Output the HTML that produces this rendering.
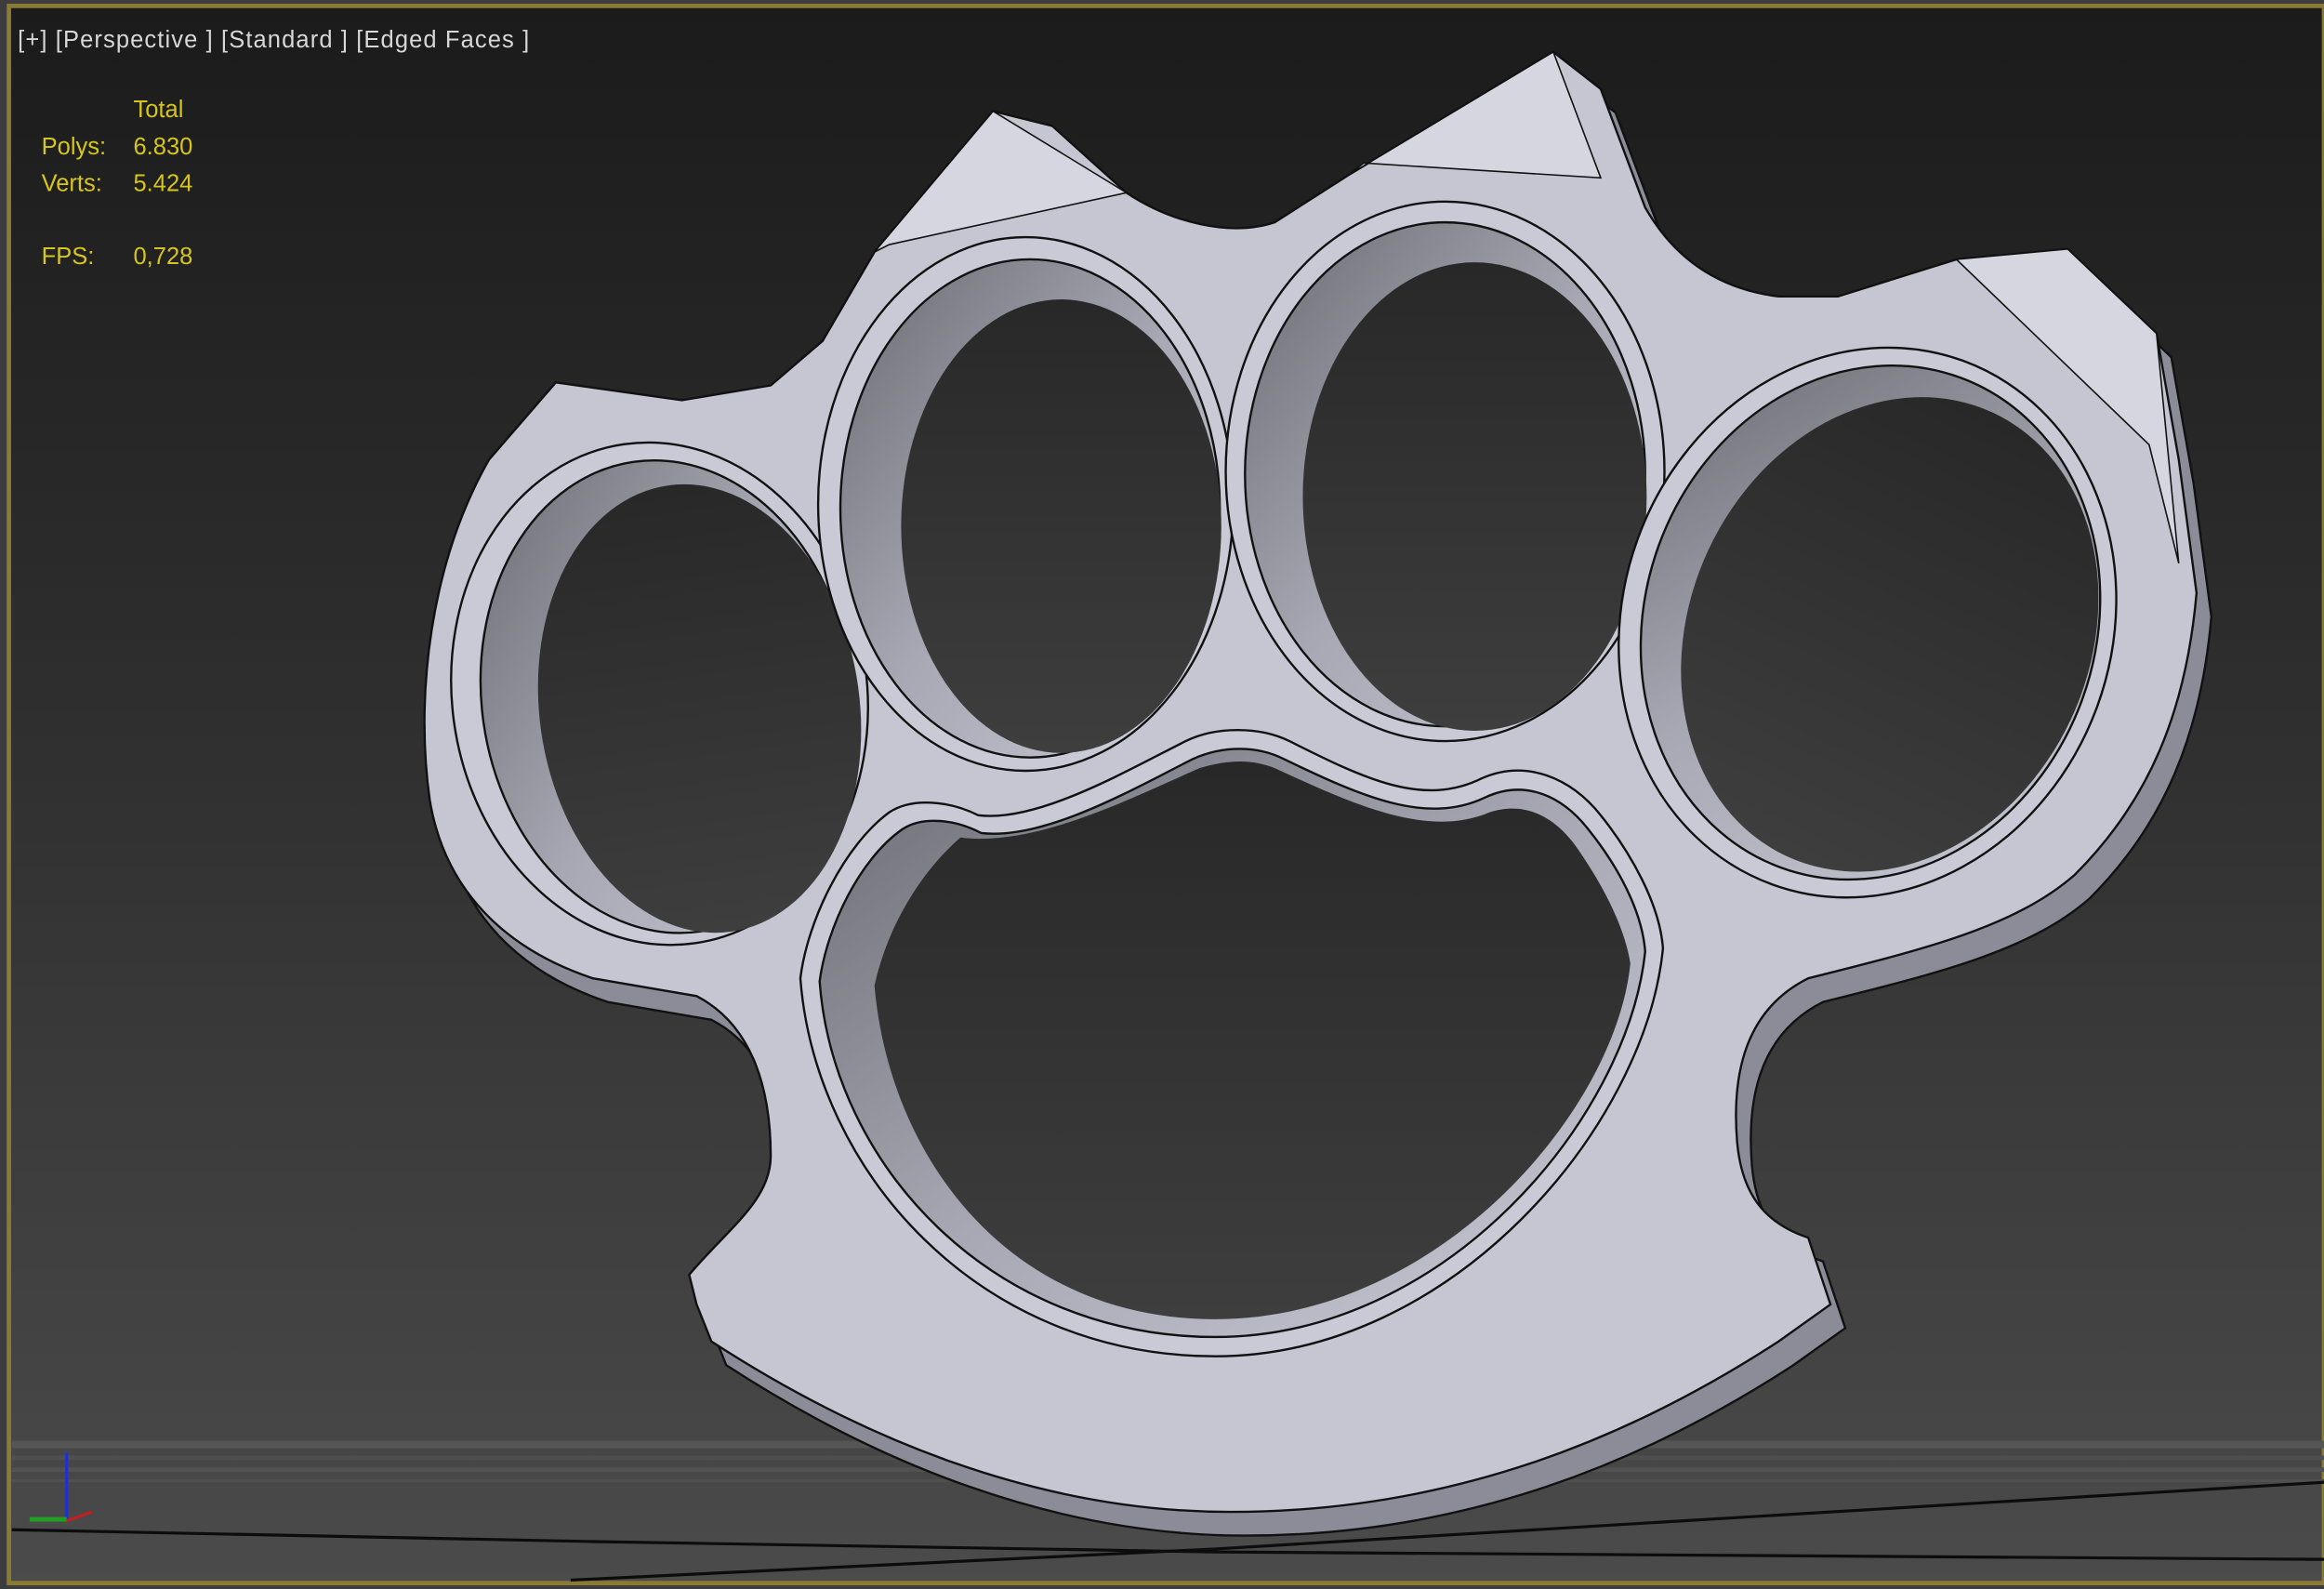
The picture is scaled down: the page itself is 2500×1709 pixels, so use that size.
<!DOCTYPE html>
<html><head><style>
html,body{margin:0;padding:0;background:#2a2a2a;}
svg{display:block}
</style></head><body>
<svg width="2500" height="1709" viewBox="0 0 1568 1072" preserveAspectRatio="none" xmlns="http://www.w3.org/2000/svg">
<defs>
<linearGradient id="bg" x1="0" y1="0" x2="0" y2="1">
<stop offset="0" stop-color="#1b1b1b"/><stop offset="0.5" stop-color="#313131"/><stop offset="1" stop-color="#4b4b4b"/>
</linearGradient>
<linearGradient id="hole" x1="0" y1="0" x2="0" y2="1">
<stop offset="0" stop-color="#282828"/><stop offset="1" stop-color="#3e3e3e"/>
</linearGradient>
<linearGradient id="wall" x1="0" y1="0" x2="1" y2="1">
<stop offset="0" stop-color="#6a6a72"/><stop offset="0.5" stop-color="#a8a8b4"/><stop offset="1" stop-color="#c8c8d4"/>
</linearGradient>
<path id="sil" d="M470,880 L465,860 C490,830 520,810 520,780 C520,730 505,690 470,672 L400,660 C340,640 300,600 290,540 C280,470 290,380 330,310 L375,258 L460,270 L520,260 L555,230 L590,170 L670,75 L710,85 L760,130 C790,150 830,160 860,150 L910,118 L1048,35 L1080,60 L1110,140 C1130,175 1160,195 1200,200 L1240,200 L1320,175 L1395,168 L1455,225 L1470,310 L1482,400 C1475,480 1450,540 1400,590 C1360,625 1300,640 1220,660 C1180,680 1168,720 1172,770 C1175,805 1190,825 1220,835 L1235,880 L1200,905 C1100,970 980,1020 830,1020 C700,1020 580,970 480,905 Z"/>
</defs>
<rect width="1568" height="1072" fill="#3c3c3c"/>
<rect x="6" y="4" width="1562" height="1064" fill="url(#bg)" stroke="#8a7a34" stroke-width="3"/>
<g>
<rect x="8" y="972" width="1560" height="5" fill="#555"/><rect x="8" y="982" width="1560" height="3" fill="#4f4f4f"/>
<rect x="8" y="990" width="1560" height="3" fill="#525252"/><rect x="8" y="998" width="1560" height="2" fill="#505050"/>
</g>
<polyline points="8,1032 400,1040 820,1047 1568,1052" fill="none" stroke="#0c0c0c" stroke-width="2"/>
<polyline points="385,1066 820,1045 1568,1000" fill="none" stroke="#0c0c0c" stroke-width="2"/>
<use href="#sil" transform="translate(10,16)" fill="#8c8c98" stroke="#111" stroke-width="1.5"/>
<use href="#sil" fill="#c6c6d2" stroke="#111" stroke-width="1.5"/>
<path d="M590,170 L670,75 L760,130 L600,165 Z M910,118 L1048,35 L1080,120 L920,110 Z M1320,175 L1395,168 L1455,225 L1470,380 L1450,300 Z" fill="#d6d6e0" stroke="#111" stroke-width="1"/>
<g stroke="#111" stroke-width="1.5">
<ellipse cx="445" cy="468" rx="140" ry="170" transform="rotate(-8 445 468)" fill="#cacad6"/>
<ellipse cx="450" cy="470" rx="125" ry="160" transform="rotate(-8 450 470)" fill="url(#wall)"/>
<ellipse cx="472" cy="478" rx="108" ry="152" transform="rotate(-8 472 478)" fill="url(#hole)" stroke="none"/>

<ellipse cx="692" cy="340" rx="140" ry="180" fill="#cacad6"/>
<ellipse cx="695" cy="343" rx="128" ry="168" fill="url(#wall)"/>
<ellipse cx="716" cy="355" rx="108" ry="153" fill="url(#hole)" stroke="none"/>

<ellipse cx="975" cy="318" rx="148" ry="182" fill="#cacad6"/>
<ellipse cx="975" cy="320" rx="135" ry="170" fill="url(#wall)"/>
<ellipse cx="995" cy="335" rx="116" ry="158" fill="url(#hole)" stroke="none"/>

<ellipse cx="1260" cy="420" rx="165" ry="188" transform="rotate(20 1260 420)" fill="#cacad6"/>
<ellipse cx="1262" cy="420" rx="152" ry="176" transform="rotate(20 1262 420)" fill="url(#wall)"/>
<ellipse cx="1275" cy="428" rx="135" ry="165" transform="rotate(25 1275 428)" fill="url(#hole)" stroke="none"/>

<path fill="#cacad6" d="M540,660 C545,620 570,570 600,548 C615,538 640,540 660,550 C700,555 760,520 800,500 C820,490 850,490 870,500 C920,525 960,545 1000,525 C1030,512 1060,525 1080,550 C1100,575 1120,610 1122,640 C1110,760 980,915 820,915 C660,915 550,790 540,660 Z"/>
<path fill="url(#wall)" d="M553,662 C558,625 580,580 608,560 C622,550 645,553 662,562 C705,567 765,532 805,512 C825,503 848,503 866,512 C918,537 962,557 1002,538 C1030,525 1055,538 1072,560 C1092,585 1108,615 1110,642 C1098,755 975,902 820,902 C668,902 562,785 553,662 Z"/>
<path fill="url(#hole)" stroke="none" d="M590,665 C600,620 625,585 648,565 C700,572 770,535 810,518 C830,512 848,512 864,520 C918,545 965,565 1005,548 C1030,540 1050,552 1064,572 C1082,598 1096,625 1100,650 C1090,750 970,890 820,890 C680,890 600,780 590,665 Z"/>
</g>
<line x1="45" y1="980" x2="45" y2="1026" stroke="#2030d0" stroke-width="2"/>
<line x1="20" y1="1025" x2="45" y2="1025" stroke="#20a020" stroke-width="3"/>
<line x1="45" y1="1026" x2="62" y2="1020" stroke="#c02020" stroke-width="2"/>
<g font-family="Liberation Sans, sans-serif" font-size="16">
<text x="12" y="32" fill="#d8d8d8" textLength="345">[+] [Perspective ] [Standard ] [Edged Faces ]</text>
<g fill="#d6c61c">
<text x="90" y="79">Total</text>
<text x="28" y="104">Polys:</text><text x="90" y="104">6.830</text>
<text x="28" y="129">Verts:</text><text x="90" y="129">5.424</text>
<text x="28" y="178">FPS:</text><text x="90" y="178">0,728</text>
</g></g>
</svg>
</body></html>
